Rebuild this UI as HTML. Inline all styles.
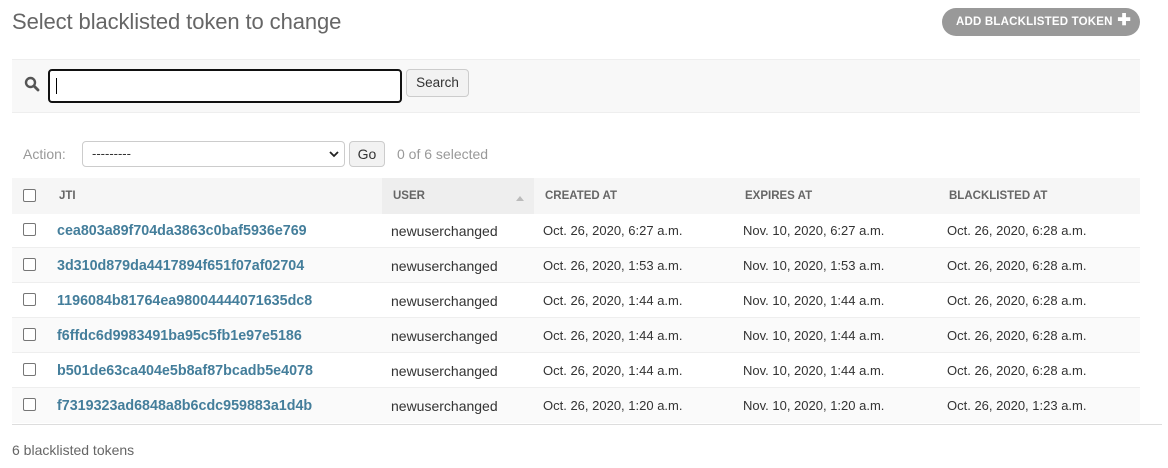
<!DOCTYPE html>
<html><head><meta charset="utf-8"><style>
*{box-sizing:border-box;margin:0;padding:0}
body{width:1168px;height:468px;background:#fff;font-family:"Liberation Sans",Arial,sans-serif;color:#333;position:relative;overflow:hidden}
.a{position:absolute;white-space:nowrap}
h1{position:absolute;left:12px;top:9px;font-size:22px;font-weight:300;color:#666;letter-spacing:-0.1px}
.add{left:942px;top:8px;width:198px;height:28px;background:#999;border-radius:15px;color:#fff;font-size:11.5px;font-weight:bold;line-height:28px;padding-left:14px;letter-spacing:0.2px}
.tb{left:12px;top:59px;width:1128px;height:54px;background:#f8f8f8;border-top:1px solid #eee;border-bottom:1px solid #eee}
.inp{left:48px;top:69px;width:354px;height:34px;border:2px solid #111;border-radius:4px;background:#fff}
.btn{background:#f2f2f2;border:1px solid #ccc;border-radius:4px;font-size:13.5px;color:#333;text-align:center}
.th{top:178px;height:36px;line-height:36px;font-size:11.5px;font-weight:bold;color:#666;background:#f6f6f6}
.cb{width:13px;height:13px;border:1px solid #767676;border-radius:2px;background:#fff}
.row{left:12px;width:1128px;height:35px;border-bottom:1px solid #eee}
.c{font-size:13px;line-height:36px}
.u{font-size:14px}
.l{color:#447e9b;font-weight:bold;font-size:14.3px}
</style></head><body>
<h1>Select blacklisted token to change</h1>
<div class="a add">ADD BLACKLISTED TOKEN <span style="font-size:16px;position:absolute;right:9px;top:-1px">✚</span></div>
<div class="a tb"></div>
<svg class="a" style="left:24px;top:76px" width="16" height="16" viewBox="0 0 16 16"><circle cx="6.5" cy="6.5" r="4.5" fill="none" stroke="#555" stroke-width="2.4"/><path d="M10 10l4 4" stroke="#555" stroke-width="2.8" stroke-linecap="round"/></svg>
<div class="a inp"><div style="position:absolute;left:6px;top:7px;width:1px;height:16px;background:#000"></div></div>
<div class="a btn" style="left:406px;top:69px;width:63px;height:28px;line-height:26px">Search</div>
<div class="a" style="left:23px;top:146px;font-size:14px;color:#999">Action:</div>
<div class="a" style="left:82px;top:141px;width:263px;height:26px;border:1px solid #ccc;border-radius:4px;background:#fff;font-size:13px;line-height:24px;padding-left:9px">---------<svg style="position:absolute;right:5px;top:8px" width="10" height="8" viewBox="0 0 10 8"><path d="M1 2l4 4 4-4" fill="none" stroke="#222" stroke-width="1.8"/></svg></div>
<div class="a btn" style="left:349px;top:141px;width:36px;height:26px;line-height:24px;font-size:14px">Go</div>
<div class="a" style="left:397px;top:146px;font-size:14px;color:#999">0 of 6 selected</div>
<div class="a th" style="left:12px;width:1128px"></div>
<div class="a th" style="left:382px;width:152px;background:#eee"></div>
<div class="a cb" style="left:23px;top:189px"></div>
<div class="a th" style="left:59px;background:none">JTI</div>
<div class="a th" style="left:393px;background:none">USER</div>
<div class="a" style="left:516px;top:196px;width:0;height:0;border-left:4px solid transparent;border-right:4px solid transparent;border-bottom:5px solid #bbb"></div>
<div class="a th" style="left:545px;background:none">CREATED AT</div>
<div class="a th" style="left:745px;background:none">EXPIRES AT</div>
<div class="a th" style="left:949px;background:none">BLACKLISTED AT</div>

<div class="a row" style="top:213px"></div><div class="a cb" style="left:23px;top:223px"></div>
<div class="a c l" style="left:57px;top:213px">cea803a89f704da3863c0baf5936e769</div><div class="a c u" style="left:391px;top:213px">newuserchanged</div><div class="a c" style="left:543px;top:213px">Oct. 26, 2020, 6:27 a.m.</div><div class="a c" style="left:743px;top:213px">Nov. 10, 2020, 6:27 a.m.</div><div class="a c" style="left:947px;top:213px">Oct. 26, 2020, 6:28 a.m.</div>

<div class="a row" style="top:248px;background:#fafafa"></div><div class="a cb" style="left:23px;top:258px"></div>
<div class="a c l" style="left:57px;top:248px">3d310d879da4417894f651f07af02704</div><div class="a c u" style="left:391px;top:248px">newuserchanged</div><div class="a c" style="left:543px;top:248px">Oct. 26, 2020, 1:53 a.m.</div><div class="a c" style="left:743px;top:248px">Nov. 10, 2020, 1:53 a.m.</div><div class="a c" style="left:947px;top:248px">Oct. 26, 2020, 6:28 a.m.</div>

<div class="a row" style="top:283px"></div><div class="a cb" style="left:23px;top:293px"></div>
<div class="a c l" style="left:57px;top:283px">1196084b81764ea98004444071635dc8</div><div class="a c u" style="left:391px;top:283px">newuserchanged</div><div class="a c" style="left:543px;top:283px">Oct. 26, 2020, 1:44 a.m.</div><div class="a c" style="left:743px;top:283px">Nov. 10, 2020, 1:44 a.m.</div><div class="a c" style="left:947px;top:283px">Oct. 26, 2020, 6:28 a.m.</div>

<div class="a row" style="top:318px;background:#fafafa"></div><div class="a cb" style="left:23px;top:328px"></div>
<div class="a c l" style="left:57px;top:318px">f6ffdc6d9983491ba95c5fb1e97e5186</div><div class="a c u" style="left:391px;top:318px">newuserchanged</div><div class="a c" style="left:543px;top:318px">Oct. 26, 2020, 1:44 a.m.</div><div class="a c" style="left:743px;top:318px">Nov. 10, 2020, 1:44 a.m.</div><div class="a c" style="left:947px;top:318px">Oct. 26, 2020, 6:28 a.m.</div>

<div class="a row" style="top:353px"></div><div class="a cb" style="left:23px;top:363px"></div>
<div class="a c l" style="left:57px;top:353px">b501de63ca404e5b8af87bcadb5e4078</div><div class="a c u" style="left:391px;top:353px">newuserchanged</div><div class="a c" style="left:543px;top:353px">Oct. 26, 2020, 1:44 a.m.</div><div class="a c" style="left:743px;top:353px">Nov. 10, 2020, 1:44 a.m.</div><div class="a c" style="left:947px;top:353px">Oct. 26, 2020, 6:28 a.m.</div>

<div class="a row" style="top:388px;background:#fafafa;border-bottom:none"></div><div class="a cb" style="left:23px;top:398px"></div>
<div class="a c l" style="left:57px;top:388px">f7319323ad6848a8b6cdc959883a1d4b</div><div class="a c u" style="left:391px;top:388px">newuserchanged</div><div class="a c" style="left:543px;top:388px">Oct. 26, 2020, 1:20 a.m.</div><div class="a c" style="left:743px;top:388px">Nov. 10, 2020, 1:20 a.m.</div><div class="a c" style="left:947px;top:388px">Oct. 26, 2020, 1:23 a.m.</div>

<div class="a" style="left:12px;top:424px;width:1150px;height:1px;background:#ddd"></div>
<div class="a" style="left:12px;top:442px;font-size:14px;color:#666">6 blacklisted tokens</div>
</body></html>
